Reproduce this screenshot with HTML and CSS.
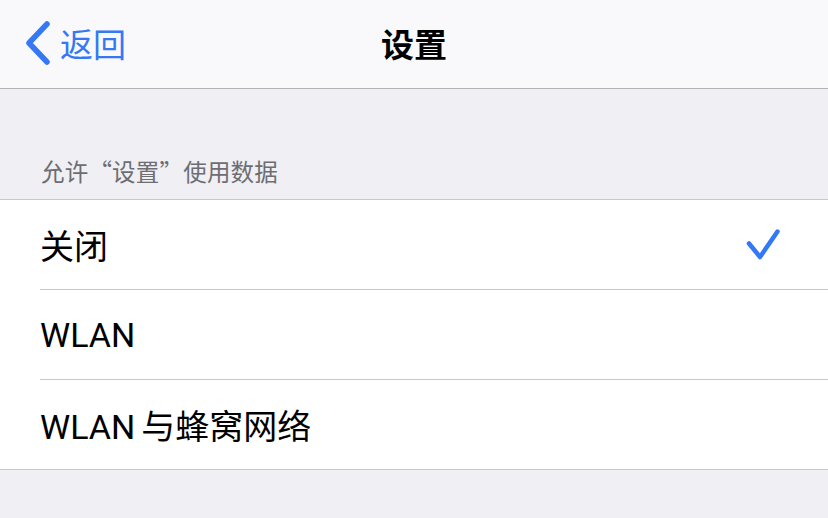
FILE: index.html
```html
<!DOCTYPE html>
<html lang="zh-CN">
<head>
<meta charset="utf-8">
<title>设置</title>
<link rel="stylesheet" href="styles.css">
</head>
<body>
<div class="screen">
  <header class="navbar">
    <a class="back" href="#">
      <svg class="chevron" width="28" height="44" viewBox="0 0 28 44">
        <path d="M23 3 L5 22 L23 41" fill="none" stroke="#3478f6" stroke-width="5.5" stroke-linecap="round" stroke-linejoin="round"/>
      </svg>
      <span>返回</span>
    </a>
    <h1 class="title">设置</h1>
  </header>

  <section class="group">
    <div class="group-header">允许“设置”使用数据</div>
    <ul class="list">
      <li class="row">
        <span class="label">关闭</span>
        <svg class="check" width="34" height="32" viewBox="0 0 34 32">
          <path d="M3 14.5 L14 28 L31.5 2.5" fill="none" stroke="#3478f6" stroke-width="4.5" stroke-linecap="round" stroke-linejoin="round"/>
        </svg>
      </li>
      <li class="row"><span class="label">WLAN</span></li>
      <li class="row"><span class="label"><span class="latin">WLAN</span>与蜂窝网络</span></li>
    </ul>
  </section>
</div>
</body>
</html>
```

FILE: styles.css
```css
html, body {
  margin: 0;
  padding: 0;
}

body {
  width: 828px;
  height: 518px;
  overflow: hidden;
  background: #efeff4;
  font-family: "Roboto", "Noto Sans CJK SC", sans-serif;
  -webkit-font-smoothing: antialiased;
}

.screen {
  display: flex;
  flex-direction: column;
}

/* top navigation bar */
.navbar {
  position: relative;
  height: 88px;
  background: #f9f9fb;
  border-bottom: 1px solid #b2b2b4;
  display: flex;
  align-items: center;
  justify-content: center;
}

.back {
  position: absolute;
  left: 24px;
  top: 0;
  bottom: 0;
  display: flex;
  align-items: center;
  gap: 8px;
  color: #3478f6;
  text-decoration: none;
  font-family: "Noto Sans CJK SC", sans-serif;
  font-size: 33px;
}

.back span {
  position: relative;
  top: -1px;
}

.chevron {
  display: block;
  margin-top: -3px;
}

.title {
  margin: 0;
  font-family: "Noto Sans CJK SC", sans-serif;
  font-size: 33px;
  font-weight: 700;
  color: #000;
  position: relative;
  top: -1px;
}

/* grouped list */
.group {
  padding-top: 64px;
}

.group-header {
  padding: 0 40px 10px 41px;
  font-family: "Noto Sans CJK SC", sans-serif;
  font-size: 23.5px;
  letter-spacing: 0.2px;
  line-height: 36px;
  color: #6d6d72;
}

.list {
  list-style: none;
  margin: 0;
  padding: 0 0 0 40px;
  background: #fff;
  border-top: 1px solid #c8c7cc;
  border-bottom: 1px solid #c8c7cc;
}

.row {
  height: 89px;
  display: flex;
  align-items: center;
  justify-content: space-between;
  padding-right: 48px;
  border-bottom: 1px solid #c8c7cc;
}

.row:last-child {
  border-bottom: none;
}

.label {
  font-size: 34px;
  color: #000;
}

/* space between Latin and CJK runs */
.latin {
  margin-right: 6px;
}

.check {
  display: block;
}
```
